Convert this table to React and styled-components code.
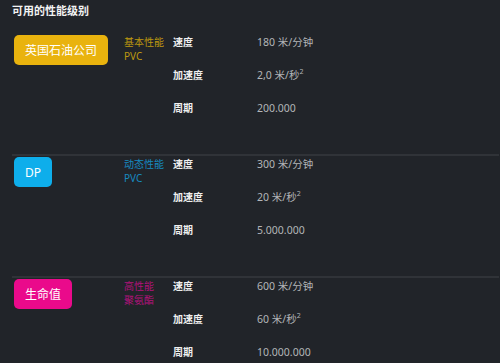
import React from "react";
import styled, { createGlobalStyle } from "styled-components";

const Global = createGlobalStyle`
  html, body { margin: 0; padding: 0; background: #212429; }
  body { font-family: "Noto Sans", "Noto Sans CJK SC", sans-serif; }
`;

const Page = styled.div`
  width: 500px;
  height: 363px;
  overflow: hidden;
  background: #212429;
  padding-left: 12px;
  box-sizing: border-box;
`;

const Title = styled.h2`
  margin: 0;
  height: 34px;
  font-size: 11px;
  line-height: 22px;
  font-weight: 700;
  color: #f2f2f2;
`;

const Section = styled.section`
  display: flex;
  margin-right: 1px;
  padding: 1px 0 20px 2px;
  border-top: ${(p) => (p.$first ? "none" : "2px solid #303338")};
`;

const BadgeCol = styled.div`
  width: 110px;
  flex: none;
`;

const Badge = styled.div`
  display: inline-flex;
  align-items: center;
  height: 30px;
  padding: 0 11px;
  border-radius: 5px;
  background: ${(p) => p.$color};
  color: #ffffff;
  font-size: 12px;
  white-space: nowrap;
`;

const Category = styled.div`
  width: 49px;
  flex: none;
  font-size: 10px;
  line-height: 14px;
  color: ${(p) => p.$color};
`;

const Specs = styled.div`
  display: flex;
  flex-direction: column;
  flex: 1;
`;

const SpecRow = styled.div`
  display: grid;
  grid-template-columns: 84px 1fr;
  height: 33px;
  line-height: 14px;
`;

const Label = styled.div`
  font-size: 10px;
  font-weight: 700;
  color: #eeeeee;
`;

const Value = styled.div`
  font-size: 10.5px;
  color: #b3b5b8;
  sup {
    font-size: 7px;
    line-height: 0;
    vertical-align: 5px;
  }
`;

const levels = [
  {
    name: "英国石油公司",
    color: "#e9b30e",
    catColor: "#bd980f",
    cat: ["基本性能", "PVC"],
    speed: "180 米/分钟",
    acc: "2,0 米/秒",
    cycle: "200.000",
  },
  {
    name: "DP",
    color: "#0eaeeb",
    catColor: "#178ac0",
    cat: ["动态性能", "PVC"],
    speed: "300 米/分钟",
    acc: "20 米/秒",
    cycle: "5.000.000",
  },
  {
    name: "生命值",
    color: "#ea0a8b",
    catColor: "#b0127a",
    cat: ["高性能", "聚氨酯"],
    speed: "600 米/分钟",
    acc: "60 米/秒",
    cycle: "10.000.000",
  },
];

export default function App() {
  return (
    <>
      <Global />
      <Page>
        <Title>可用的性能级别</Title>
        {levels.map((l, i) => (
          <Section key={l.name} $first={i === 0}>
            <BadgeCol>
              <Badge $color={l.color}>{l.name}</Badge>
            </BadgeCol>
            <Category $color={l.catColor}>
              {l.cat[0]}
              <br />
              {l.cat[1]}
            </Category>
            <Specs>
              <SpecRow>
                <Label>速度</Label>
                <Value>{l.speed}</Value>
              </SpecRow>
              <SpecRow>
                <Label>加速度</Label>
                <Value>
                  {l.acc}
                  <sup>2</sup>
                </Value>
              </SpecRow>
              <SpecRow>
                <Label>周期</Label>
                <Value>{l.cycle}</Value>
              </SpecRow>
            </Specs>
          </Section>
        ))}
      </Page>
    </>
  );
}
